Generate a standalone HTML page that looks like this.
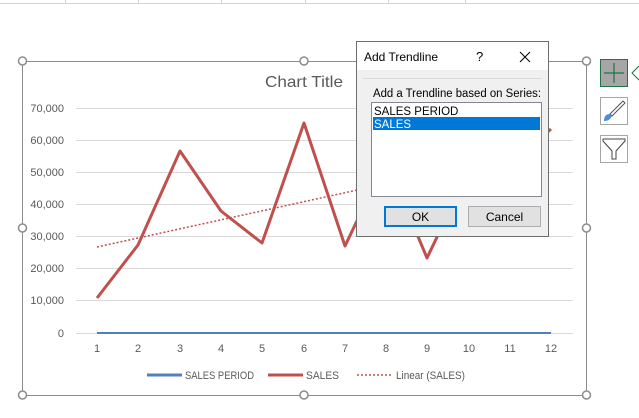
<!DOCTYPE html>
<html><head><style>
body{margin:0;width:639px;height:418px;background:#fff;position:relative;overflow:hidden;font-family:"Liberation Sans",sans-serif}
.abs{position:absolute}
</style></head><body>
<svg class="abs" style="left:0;top:0" width="639" height="418">
<g stroke="#d4d4d4" stroke-width="1">
<line x1="0" y1="3.5" x2="639" y2="3.5"/>
<line x1="65.5" y1="0" x2="65.5" y2="3"/><line x1="138.5" y1="0" x2="138.5" y2="3"/><line x1="221.5" y1="0" x2="221.5" y2="3"/><line x1="305.5" y1="0" x2="305.5" y2="3"/><line x1="388.5" y1="0" x2="388.5" y2="3"/><line x1="465.5" y1="0" x2="465.5" y2="3"/>
</g>
<rect x="22.5" y="61.5" width="564" height="334" fill="none" stroke="#8c8c8c"/>
<g stroke="#d9d9d9">
<line x1="76" y1="108.5" x2="573" y2="108.5"/><line x1="76" y1="140.5" x2="573" y2="140.5"/><line x1="76" y1="172.5" x2="573" y2="172.5"/><line x1="76" y1="204.5" x2="573" y2="204.5"/><line x1="76" y1="236.5" x2="573" y2="236.5"/><line x1="76" y1="268.5" x2="573" y2="268.5"/><line x1="76" y1="300.5" x2="573" y2="300.5"/><line x1="76" y1="333.5" x2="573" y2="333.5"/>
</g>
<g font-size="11" fill="#595959" text-anchor="end">
<text x="64" y="112">70,000</text><text x="64" y="144">60,000</text><text x="64" y="176">50,000</text><text x="64" y="208">40,000</text><text x="64" y="240">30,000</text><text x="64" y="272">20,000</text><text x="64" y="304">10,000</text><text x="64" y="337">0</text>
</g>
<g font-size="11" fill="#595959" text-anchor="middle">
<text x="97" y="352">1</text><text x="138" y="352">2</text><text x="180" y="352">3</text><text x="221" y="352">4</text><text x="262" y="352">5</text><text x="304" y="352">6</text><text x="345" y="352">7</text><text x="386" y="352">8</text><text x="427" y="352">9</text><text x="469" y="352">10</text><text x="510" y="352">11</text><text x="551" y="352">12</text>
</g>
<text x="265" y="87" font-size="16" fill="#595959" textLength="78" lengthAdjust="spacingAndGlyphs">Chart Title</text>
<line x1="97" y1="333" x2="551" y2="333" stroke="#4f81bd" stroke-width="2"/>
<line x1="97" y1="247" x2="540" y2="150" stroke="#c0504d" stroke-width="1.5" stroke-dasharray="2,2"/>
<polyline points="97,298 138,245 180,151 221,211 262,243 304,123 345,246 386,160 427,258 469,170 510,165 551,129" fill="none" stroke="#c0504d" stroke-width="3" stroke-linejoin="round"/>
<line x1="147" y1="375" x2="182" y2="375" stroke="#4f81bd" stroke-width="3"/>
<text x="185" y="379" font-size="11" fill="#595959" textLength="69" lengthAdjust="spacingAndGlyphs">SALES PERIOD</text>
<line x1="268" y1="375" x2="303" y2="375" stroke="#c0504d" stroke-width="3"/>
<text x="306" y="379" font-size="11" fill="#595959" textLength="33" lengthAdjust="spacingAndGlyphs">SALES</text>
<line x1="357" y1="375" x2="392" y2="375" stroke="#c0504d" stroke-width="1.5" stroke-dasharray="2,2"/>
<text x="396" y="379" font-size="11" fill="#595959" textLength="69" lengthAdjust="spacingAndGlyphs">Linear (SALES)</text>
<g fill="#fff" stroke="#8c8c8c" stroke-width="1.5">
<circle cx="22.5" cy="61" r="4"/><circle cx="304" cy="61" r="4"/><circle cx="586.5" cy="61" r="4"/>
<circle cx="22.5" cy="228" r="4"/><circle cx="586.5" cy="228" r="4"/>
<circle cx="22.5" cy="395" r="4"/><circle cx="304" cy="395" r="4"/><circle cx="586.5" cy="395" r="4"/>
</g>
<rect x="600.5" y="59.5" width="27" height="27" fill="#a6a6a6" stroke="#217346"/>
<line x1="614" y1="63" x2="614" y2="83" stroke="#217346" stroke-width="1.2"/><line x1="604" y1="73" x2="624" y2="73" stroke="#217346" stroke-width="1.2"/>
<polyline points="639,66 632,73 639,80" fill="none" stroke="#217346"/>
<rect x="600.5" y="97.5" width="27" height="27" fill="#fff" stroke="#a6a6a6"/>
<path d="M623 101 L625 103 L612 116 L610 114 Z" fill="#fff" stroke="#555"/>
<path d="M610 114 Q604 114 604 121 Q610 121 612 116 Z" fill="#4a8fd8"/>
<rect x="600.5" y="135.5" width="27" height="27" fill="#fff" stroke="#a6a6a6"/>
<path d="M603 139 H625 V141 L616 151 V159 H612 V151 L603 141 Z" fill="#fff" stroke="#444"/>
<rect x="356.5" y="41.5" width="192" height="195" fill="#f0f0f0" stroke="#6d6d6d"/>
<rect x="357" y="42" width="191" height="28" fill="#fff"/>
<line x1="363" y1="78.5" x2="542" y2="78.5" stroke="#d9d9d9"/>
<text x="364" y="61" font-size="12" fill="#000">Add Trendline</text>
<text x="476" y="61" font-size="13" fill="#000">?</text>
<path d="M520 52 L530 62 M530 52 L520 62" stroke="#000" stroke-width="1"/>
<text x="373" y="97" font-size="11.5" fill="#000" textLength="168" lengthAdjust="spacingAndGlyphs">Add a Trendline based on Series:</text>
<rect x="371.5" y="102.5" width="170" height="94" fill="#fff" stroke="#828790"/>
<text x="374" y="115" font-size="11.5" fill="#000">SALES PERIOD</text>
<rect x="373" y="117" width="167" height="13" fill="#0078d7"/>
<text x="374" y="128" font-size="11.5" fill="#fff">SALES</text>
<rect x="385" y="207" width="71" height="19" fill="#e1e1e1" stroke="#0078d7" stroke-width="2"/>
<text x="420.5" y="221" font-size="12" fill="#000" text-anchor="middle">OK</text>
<rect x="468.5" y="206.5" width="72" height="20" fill="#e1e1e1" stroke="#adadad"/>
<text x="504.5" y="221" font-size="12" fill="#000" text-anchor="middle">Cancel</text>
</svg>
</body></html>
